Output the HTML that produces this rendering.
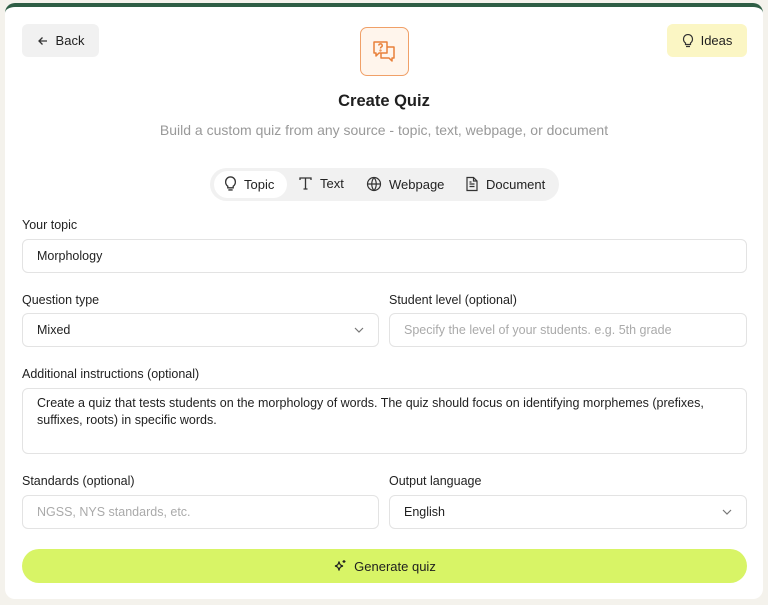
<!DOCTYPE html>
<html><head><style>
*{box-sizing:border-box;margin:0;padding:0}
body{width:768px;height:605px;background:#f4f2ec;font-family:"Liberation Sans",sans-serif;position:relative;overflow:hidden;color:#1f1f1f}
.card{position:absolute;left:5px;top:3px;width:758px;height:596px;background:#fff;border-radius:10px;border-top:4px solid #2e5e45;}
.a{position:absolute}
.btn{border-radius:6px;font-size:13px;display:flex;align-items:center;justify-content:center;gap:7px}
.lbl{font-size:12.5px;color:#222}
.inp{border:1px solid #e3e3e3;border-radius:6px;height:34px;font-size:12.5px;padding:0 14px;display:flex;align-items:center}
.ph{color:#aaa}
.tab{display:flex;align-items:center;gap:7px;font-size:13px;color:#222}
</style></head><body>
<div class="card"></div>
<div class="a btn" style="left:22px;top:24px;width:77px;height:33px;background:#f1f1f1">
<svg width="12" height="12" viewBox="0 0 12 12" fill="none" stroke="#333" stroke-width="1.3"><path d="M10 6H2M5.5 2.5L2 6l3.5 3.5"/></svg>Back</div>
<div class="a btn" style="left:667px;top:24px;width:80px;height:33px;background:#fbf6c4">
<svg width="12" height="14" viewBox="0 0 12 14" fill="none" stroke="#333" stroke-width="1.2"><path d="M3.5 9C2 8 1.5 6.5 1.5 5a4.5 4.5 0 0 1 9 0c0 1.5-.5 3-2 4v1.5h-5z M4 12.5h4"/></svg>Ideas</div>
<div class="a" style="left:360px;top:27px;width:49px;height:49px;border:1px solid #f0a068;background:#fff5ec;border-radius:7px">
<svg class="a" style="left:11px;top:12px" width="26" height="26" viewBox="0 0 26 26" fill="none" stroke="#e8803a" stroke-width="1.5" stroke-linejoin="round"><path d="M2 2h13v11H7l-3 3v-3H2z"/><path d="M15 7h7v11h-2v3l-3-3H9v-5"/><path d="M6.8 5.5a1.7 1.7 0 1 1 2.4 1.6c-.6.3-.7.7-.7 1.4"/><circle cx="8.5" cy="10.5" r=".4" fill="#e8803a"/></svg></div>
<div class="a" style="left:0;width:768px;top:92px;text-align:center;font-size:16.5px;font-weight:bold">Create Quiz</div>
<div class="a" style="left:0;width:768px;top:122px;text-align:center;font-size:14px;color:#999">Build a custom quiz from any source - topic, text, webpage, or document</div>
<div class="a" style="left:210px;top:168px;width:349px;height:33px;background:#f1f1f1;border-radius:17px"></div>
<div class="a" style="left:214px;top:171px;width:73px;height:27px;background:#fff;border-radius:14px"></div>
<div class="a tab" style="left:224px;top:176px"><svg width="13" height="16" viewBox="0 0 12 14" fill="none" stroke="#333" stroke-width="1.2"><path d="M3.5 9C2 8 1.5 6.5 1.5 5a4.5 4.5 0 0 1 9 0c0 1.5-.5 3-2 4v1.5h-5z M4 12.5h4"/></svg>Topic</div>
<div class="a tab" style="left:298px;top:176px"><svg width="15" height="15" viewBox="0 0 15 15" fill="none" stroke="#333" stroke-width="1.3"><path d="M2 4V2h11v2M7.5 2v11M5.5 13h4"/></svg>Text</div>
<div class="a tab" style="left:366px;top:176px"><svg width="16" height="16" viewBox="0 0 16 16" fill="none" stroke="#333" stroke-width="1.2"><circle cx="8" cy="8" r="6.5"/><path d="M1.5 8h13M8 1.5c-3 3.5-3 9.5 0 13M8 1.5c3 3.5 3 9.5 0 13"/></svg>Webpage</div>
<div class="a tab" style="left:465px;top:176px"><svg width="14" height="16" viewBox="0 0 14 16" fill="none" stroke="#333" stroke-width="1.2"><path d="M2 1.5h6.5l3.5 3.5v9.5H2z M8.5 1.5V5H12 M4.5 8h5M4.5 10.5h5M4.5 6h2"/></svg>Document</div>
<div class="a lbl" style="left:22px;top:218px">Your topic</div>
<div class="a inp" style="left:22px;top:239px;width:725px">Morphology</div>
<div class="a lbl" style="left:22px;top:293px">Question type</div>
<div class="a inp" style="left:22px;top:313px;width:357px;justify-content:space-between">Mixed<svg width="10" height="6" viewBox="0 0 10 6" fill="none" stroke="#777" stroke-width="1.2"><path d="M1 1l4 4 4-4"/></svg></div>
<div class="a lbl" style="left:389px;top:293px">Student level (optional)</div>
<div class="a inp ph" style="left:389px;top:313px;width:358px">Specify the level of your students. e.g. 5th grade</div>
<div class="a lbl" style="left:22px;top:367px">Additional instructions (optional)</div>
<div class="a" style="left:22px;top:388px;width:725px;height:66px;border:1px solid #e3e3e3;border-radius:6px;font-size:12.5px;line-height:17px;padding:6px 14px">Create a quiz that tests students on the morphology of words. The quiz should focus on identifying morphemes (prefixes, suffixes, roots) in specific words.</div>
<div class="a lbl" style="left:22px;top:474px">Standards (optional)</div>
<div class="a inp ph" style="left:22px;top:495px;width:357px">NGSS, NYS standards, etc.</div>
<div class="a lbl" style="left:389px;top:474px">Output language</div>
<div class="a inp" style="left:389px;top:495px;width:358px;justify-content:space-between">English<svg width="10" height="6" viewBox="0 0 10 6" fill="none" stroke="#777" stroke-width="1.2"><path d="M1 1l4 4 4-4"/></svg></div>
<div class="a btn" style="left:22px;top:549px;width:725px;height:34px;background:#d8f466;border-radius:17px">
<svg width="14" height="14" viewBox="0 0 14 14" fill="none" stroke="#222" stroke-width="1.2"><path d="M6 2.5c.5 3 1.5 4 4 4.5-2.5.5-3.5 1.5-4 4.5-.5-3-1.5-4-4-4.5 2.5-.5 3.5-1.5 4-4.5z M11 1v3M9.5 2.5h3"/></svg>Generate quiz</div>
</body></html>
